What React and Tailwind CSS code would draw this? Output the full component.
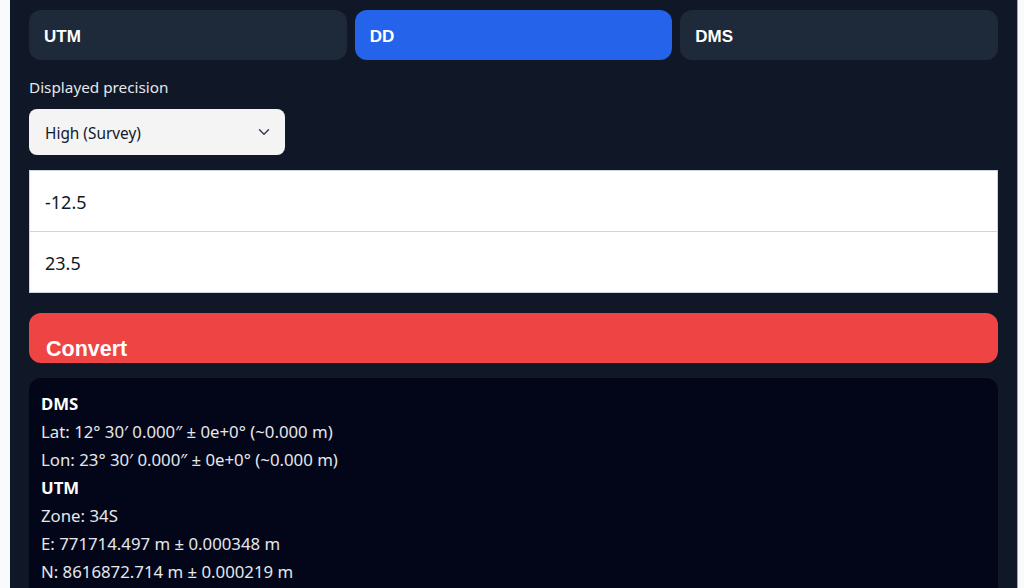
import React, { useState } from "react";
import { ChevronDown } from "lucide-react";

const TABS = ["UTM", "DD", "DMS"];

const RESULT = [
  { heading: "DMS" },
  { text: "Lat: 12° 30′ 0.000″ ± 0e+0° (~0.000 m)" },
  { text: "Lon: 23° 30′ 0.000″ ± 0e+0° (~0.000 m)" },
  { heading: "UTM" },
  { text: "Zone: 34S" },
  { text: "E: 771714.497 m ± 0.000348 m" },
  { text: "N: 8616872.714 m ± 0.000219 m" },
];

const App = () => {
  const [mode, setMode] = useState("DD");
  const [lat, setLat] = useState("-12.5");
  const [lon, setLon] = useState("23.5");

  return (
    <div className="min-h-screen bg-[#f9fafb] pl-[10px] pr-[6px] font-['Noto_Sans',sans-serif]">
      <div className="min-h-screen bg-[#101828] border-r border-[#a0a4ab] px-[19px] pt-[10px]">
        {/* coordinate format tabs */}
        <div className="grid grid-cols-3 gap-2">
          {TABS.map((t) => (
            <button
              key={t}
              onClick={() => setMode(t)}
              className={
                "h-[50px] rounded-xl px-[15px] pt-[3px] text-left text-[17px] font-bold text-white font-['Liberation_Sans',Arial,sans-serif] " +
                (mode === t ? "bg-[#2563eb]" : "bg-[#1e2939]")
              }
            >
              {t}
            </button>
          ))}
        </div>

        <label className="block mt-[16px] text-[15.3px] text-[#e5e7eb]">
          Displayed precision
        </label>
        <div className="relative mt-[10px] w-[256px]">
          <select className="w-full h-[46px] appearance-none rounded-lg bg-[#f4f4f5] pl-[16px] pt-[3px] text-[15.4px] text-[#111827] outline-none">
            <option>High (Survey)</option>
            <option>Medium</option>
            <option>Low</option>
          </select>
          <ChevronDown
            size={18}
            strokeWidth={2}
            className="pointer-events-none absolute right-[12px] top-[14px] text-[#374151]"
          />
        </div>

        {/* lat / lon inputs */}
        <div className="mt-[15px] flex flex-col">
          <input
            value={lat}
            onChange={(e) => setLat(e.target.value)}
            className="h-[62px] border border-[#cbd5e1] bg-white px-[15px] pt-[2px] text-[18px] text-[#111827] outline-none"
          />
          <input
            value={lon}
            onChange={(e) => setLon(e.target.value)}
            className="h-[61px] border border-t-0 border-[#cbd5e1] bg-white px-[15px] pt-[2px] text-[18px] text-[#111827] outline-none"
          />
        </div>

        <button className="mt-[20px] h-[50px] w-full rounded-xl bg-[#ef4444] px-[17px] pt-[20px] text-left text-[21.5px] font-bold text-white font-['Liberation_Sans',Arial,sans-serif]">
          Convert
        </button>

        {/* conversion output */}
        <div className="mt-[15px] rounded-xl bg-[#020618] px-3 pt-3 pb-3 text-[16.8px] leading-7 text-[#e5e7eb]">
          {RESULT.map((r, i) =>
            r.heading ? (
              <div key={i} className="font-bold text-white">
                {r.heading}
              </div>
            ) : (
              <div key={i}>{r.text}</div>
            )
          )}
        </div>
      </div>
    </div>
  );
};

export default App;
